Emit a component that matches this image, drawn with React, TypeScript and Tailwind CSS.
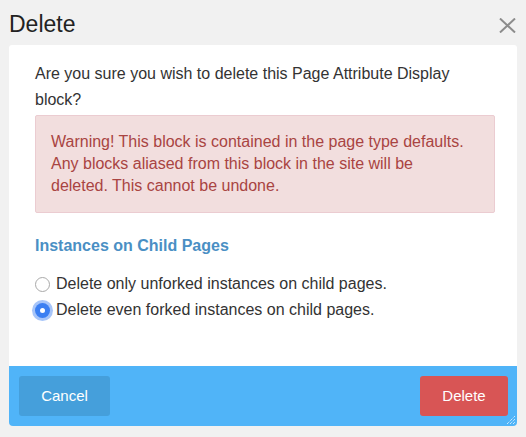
import { useState } from 'react';

function CloseIcon() {
  return (
    <svg width="17" height="15" viewBox="0 0 17 15" className="text-[#8c8c8c]">
      <path d="M1 0.5 L16 14.5 M16 0.5 L1 14.5" stroke="currentColor" strokeWidth="2" fill="none" />
    </svg>
  );
}

function ResizeGrip() {
  return (
    <svg width="8" height="8" viewBox="0 0 8 8" className="absolute right-[2px] bottom-[2px]">
      <path d="M0 8 L8 0 M3 8 L8 3 M6 8 L8 6" stroke="#ffffff" strokeWidth="1" strokeDasharray="1 1" fill="none" />
    </svg>
  );
}

function Radio({ checked, label, onSelect }: { checked: boolean; label: string; onSelect: () => void }) {
  return (
    <label className="flex items-center h-[26px] cursor-pointer" onClick={onSelect}>
      {checked ? (
        <span className="w-[15px] h-[15px] mr-[6px] rounded-full bg-[#3b7ff2] shadow-[0_0_0_3px_rgba(59,127,242,0.45)] flex items-center justify-center">
          <span className="w-[5px] h-[5px] rounded-full bg-white" />
        </span>
      ) : (
        <span className="w-[15px] h-[15px] mr-[6px] rounded-full border border-[#a9a9a9] bg-white" />
      )}
      <span>{label}</span>
    </label>
  );
}

export default function App() {
  const [mode, setMode] = useState<'unforked' | 'forked'>('forked');

  return (
    <div className="w-[526px] h-[437px] bg-[#f1f1f1] font-['Liberation_Sans',Arial,sans-serif] text-[#333]">
      <div className="h-[45px] flex items-start justify-between pl-[9px] pr-[10px]">
        <h1 className="pt-[13px] text-[23px] leading-[23px] text-[#222]">Delete</h1>
        <button className="mt-[18px]">
          <CloseIcon />
        </button>
      </div>

      <div className="mx-[9px] bg-white rounded-t-[3px] h-[321px] pl-[26px] pr-[22px] pt-[16px] text-[16px]">
        <p className="leading-[26px]">Are you sure you wish to delete this Page Attribute Display block?</p>

        <div className="mt-[2px] border border-[#ebccd1] bg-[#f2dede] text-[#a94442] pl-[15px] pr-[24px] py-[15px] leading-[22px] rounded-[2px]">
          Warning! This block is contained in the page type defaults. Any blocks aliased from this block in the site will be deleted. This cannot be undone.
        </div>

        <h3 className="mt-[23px] font-bold text-[#4a8fc4] leading-[20px]">Instances on Child Pages</h3>

        <div className="mt-[15px]">
          <Radio
            checked={mode === 'unforked'}
            label="Delete only unforked instances on child pages."
            onSelect={() => setMode('unforked')}
          />
          <Radio
            checked={mode === 'forked'}
            label="Delete even forked instances on child pages."
            onSelect={() => setMode('forked')}
          />
        </div>
      </div>

      <div className="relative mx-[9px] h-[60px] bg-[#50b4f8] rounded-b-[4px] flex items-center justify-between pl-[10px] pr-[9px]">
        <button className="w-[91px] h-[40px] rounded-[3px] bg-[#459fdb] text-white text-[15px]">Cancel</button>
        <button className="w-[88px] h-[40px] rounded-[3px] bg-[#d85555] text-white text-[15px]">Delete</button>
        <ResizeGrip />
      </div>
    </div>
  );
}
